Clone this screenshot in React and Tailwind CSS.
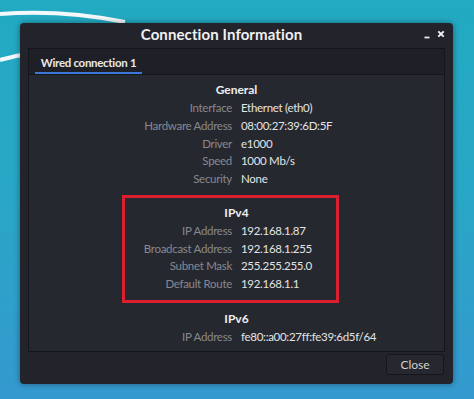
import React from 'react';

const general = [
  ['Interface', 'Ethernet (eth0)'],
  ['Hardware Address', '08:00:27:39:6D:5F'],
  ['Driver', 'e1000'],
  ['Speed', '1000 Mb/s'],
  ['Security', 'None'],
];

const ipv4 = [
  ['IP Address', '192.168.1.87'],
  ['Broadcast Address', '192.168.1.255'],
  ['Subnet Mask', '255.255.255.0'],
  ['Default Route', '192.168.1.1'],
];

const ipv6 = [['IP Address', 'fe80::a00:27ff:fe39:6d5f/64']];

const Section = ({ title, rows }) => (
  <div>
    <div className="h-[18px] leading-[18px] text-center text-[12px] font-bold text-[#eeeeee]">{title}</div>
    <div className="grid grid-cols-[203px_1fr] text-[11.5px] tracking-[-0.3px]">
      {rows.map(([label, value]) => (
        <React.Fragment key={label}>
          <div className="h-[17.75px] leading-[17.75px] text-right text-[#86888f]">{label}</div>
          <div className="h-[17.75px] leading-[17.75px] pl-[9px] text-[#e4e4e4]">{value}</div>
        </React.Fragment>
      ))}
    </div>
  </div>
);

const App = () => {
  return (
    <div
      className="relative w-[474px] h-[399px] overflow-hidden bg-gradient-to-b from-[#22aac2] via-[#29a6c6] to-[#3499cf] pt-[23px] pl-[20px]"
      style={{ fontFamily: 'Lato, "Noto Sans", sans-serif' }}
    >
      {/* wallpaper swooshes */}
      <svg className="absolute left-0 top-0" width="474" height="399" viewBox="0 0 474 399">
        <path d="M0 14 C 40 11, 85 14, 125 22" stroke="#f4f8fa" strokeWidth="4" fill="none" />
        <path d="M0 60 C 8 58, 15 56, 22 55" stroke="#f4f8fa" strokeWidth="4" fill="none" />
      </svg>

      {/* window */}
      <div className="relative w-[433px] h-[361px] rounded-[4px] bg-[#22232b] shadow-[0_0_6px_rgba(0,0,0,0.4)] flex flex-col">
        {/* title bar */}
        <div className="relative h-[25px] flex items-center justify-center pr-[30px] pb-[2px]">
          <span className="text-[15px] font-bold text-[#f0f0f0] tracking-[0.1px]">Connection Information</span>
          <div className="absolute right-[8px] top-[6px] flex items-center gap-[6px]">
            <svg width="8" height="10" viewBox="0 0 8 10">
              <path d="M1.5 8.5 H6.5" stroke="#e8e8e8" strokeWidth="1.8" />
            </svg>
            <svg width="8" height="10" viewBox="0 0 8 10">
              <path d="M1.3 2.3 L6.7 7.7 M6.7 2.3 L1.3 7.7" stroke="#f4f4f4" strokeWidth="1.9" />
            </svg>
          </div>
        </div>

        {/* notebook */}
        <div className="mx-[8px] h-[304px] border border-[#15161b] flex flex-col">
          <div className="h-[26px] bg-[#1f2027] border-b border-[#16171c] flex px-[6px]">
            <div className="w-[107px] h-full flex flex-col justify-between">
              <span className="text-[11.5px] font-bold text-[#e8e8e8] text-center pt-[5px] tracking-[-0.3px]">Wired connection 1</span>
              <div className="h-[2px] bg-[#3d78d8]" />
            </div>
          </div>
          <div className="flex-1 bg-[#262830] pt-[6px]">
            <Section title="General" rows={general} />
            <div className="relative mt-[16px]">
              <Section title="IPv4" rows={ipv4} />
              <div className="absolute left-[93px] top-[-9px] w-[217px] h-[108px] border-[3px] border-[#dc1f2e]" />
            </div>
            <div className="mt-[17px]">
              <Section title="IPv6" rows={ipv6} />
            </div>
          </div>
        </div>

        {/* footer */}
        <div className="flex justify-end pr-[9px] pt-[2px]">
          <button className="w-[58px] h-[21px] rounded-[3px] border border-[#15161a] bg-[#262830] text-[12px] text-[#d2d2d2]">
            Close
          </button>
        </div>
      </div>
    </div>
  );
};

export default App;
